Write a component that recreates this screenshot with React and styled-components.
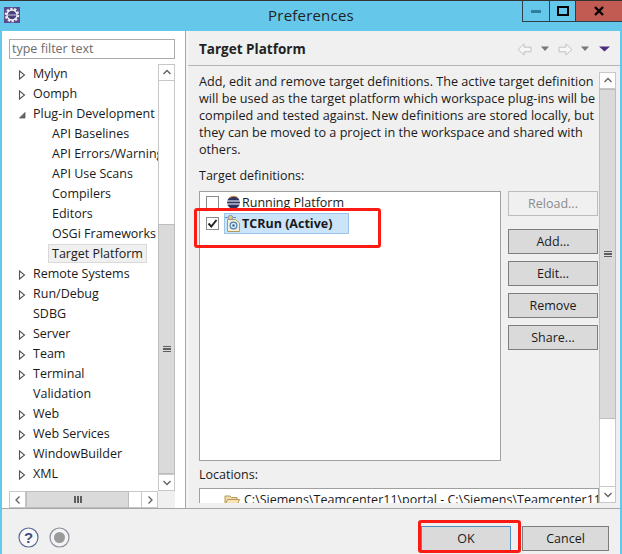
import React from "react"
import styled, { createGlobalStyle } from "styled-components"

const GlobalStyle = createGlobalStyle`
  html, body {
    margin: 0;
    padding: 0;
    background: #65c8ea;
  }

  * {
    box-sizing: border-box;
  }
`

const Window = styled.div`
  position: relative;
  width: 622px;
  height: 554px;
  display: flex;
  flex-direction: column;
  overflow: hidden;
  background: #65c8ea;
  border-top: 1px solid #333;
  color: #1a1a1a;
  font-family: "Open Sans", "Noto Sans", sans-serif;
  font-size: 12.5px;
`

const TitleBar = styled.div`
  position: relative;
  height: 30px;
  flex: none;
  display: flex;
  justify-content: space-between;
  padding-left: 4px;
`

const AppIcon = styled.svg`
  width: 16px;
  height: 16px;
  margin-top: 6px;
`

const Title = styled.div`
  position: absolute;
  left: 0;
  right: 0;
  top: 4px;
  text-align: center;
  font-size: 15px;
  color: #222;
  letter-spacing: 0.2px;
`

const Controls = styled.div`
  display: flex;
  height: 21px;
  z-index: 1;
`

const Control = styled.div`
  width: ${(p) => p.$w}px;
  display: flex;
  align-items: center;
  justify-content: center;
  background: ${(p) => (p.$close ? "#c25b52" : "transparent")};
  border: 1px solid #2e3f48;
  border-top: 0;
  border-left-width: ${(p) => (p.$first ? 1 : 0)}px;
  border-right-width: ${(p) => (p.$close ? 0 : 1)}px;
`

const Body = styled.div`
  flex: 1;
  min-height: 0;
  display: flex;
  margin: 0 2px;
  background: #f0f0f0;
`

const Sidebar = styled.div`
  width: 184px;
  flex: none;
  background: #fff;
  padding: 8px 10px 0 7px;
  display: flex;
  flex-direction: column;
  border-right: 1px solid #a6a6a6;
`

const Filter = styled.div`
  height: 20px;
  flex: none;
  border: 1px solid #ababab;
  padding-left: 2px;
  line-height: 18px;
  color: #6d6d6d;
`

const TreeArea = styled.div`
  margin-top: 5px;
  height: 444px;
  display: grid;
  grid-template-columns: 149px 17px;
  grid-template-rows: 427px 17px;
`

const Tree = styled.div`
  overflow: hidden;
  white-space: nowrap;
`

const Row = styled.div`
  height: 20px;
  display: flex;
  padding-left: ${(p) => (p.$child ? 39 : 20)}px;
  position: relative;
`

const RowLabel = styled.span`
  padding: 0 3px;
  height: 19px;
  line-height: 17px;
  background: ${(p) => (p.$selected ? "#f0f0f0" : "transparent")};
  border: 1px solid ${(p) => (p.$selected ? "#d9d9d9" : "transparent")};
`

const Twist = styled.svg`
  position: absolute;
  left: 7px;
  top: 5px;
  width: 12px;
  height: 12px;
`

const VBar = styled.div`
  display: flex;
  flex-direction: column;
  width: 17px;
  background: #fff;
`

const HBar = styled.div`
  display: flex;
  height: 17px;
  background: #fff;
`

const ArrowBox = styled.div`
  flex: none;
  width: 17px;
  height: 17px;
  background: #fff;
  border: 1px solid #c8c8c8;
  display: flex;
  align-items: center;
  justify-content: center;
`

const Track = styled.div`
  flex: ${(p) => p.$size};
  border: 0 solid #c8c8c8;
  border-width: ${(p) => (p.$horizontal ? "1px 0" : "0 1px")};
`

const Thumb = styled.div`
  flex: ${(p) => p.$size};
  background: #dadada;
  border: 1px solid #bdbdbd;
  display: flex;
  align-items: center;
  justify-content: center;
  flex-direction: ${(p) => (p.$horizontal ? "row" : "column")};
  gap: 1px;
`

const Grip = styled.span`
  background: #5e5e5e;
  width: ${(p) => (p.$horizontal ? "2px" : "8px")};
  height: ${(p) => (p.$horizontal ? "7px" : "1.5px")};
`

const Corner = styled.div`
  background: #f0f0f0;
`

const Main = styled.div`
  flex: 1;
  min-width: 0;
  margin-left: 1px;
  border-left: 1px solid #f7f7f7;
  display: flex;
  flex-direction: column;
`

const Header = styled.div`
  height: 35px;
  flex: none;
  display: flex;
  align-items: center;
  justify-content: space-between;
  padding: 1px 10px 0 11px;
  border-bottom: 1px solid #b4b4b4;
`

const Heading = styled.div`
  font-size: 13.5px;
  font-weight: 700;
  color: #222;
`

const Nav = styled.div`
  display: flex;
  align-items: center;
  margin-top: 1px;
`

const NavIcon = styled.svg`
  display: block;
  margin-left: ${(p) => p.$gap || 0}px;
`

const Scroller = styled.div`
  flex: 1;
  min-height: 0;
  display: flex;
  padding: 6px 0 5px 0;
`

const Content = styled.div`
  width: 411px;
  flex: none;
  padding-left: 11px;
  display: flex;
  flex-direction: column;
  overflow: hidden;
`

const Intro = styled.p`
  margin: 0;
  font-size: 12.65px;
  line-height: 17px;
  white-space: nowrap;
  height: 94px;
  flex: none;
  padding-top: 1px;
`

const Label = styled.div`
  height: 20px;
  flex: none;
  margin-top: ${(p) => p.$gap || 0}px;
  line-height: 20px;
  white-space: nowrap;
`

const DefsRow = styled.div`
  display: flex;
  gap: 7px;
  height: 270px;
  margin-top: 5px;
  flex: none;
`

const DefsList = styled.div`
  width: 302px;
  background: #fff;
  border: 1px solid #a0a0a0;
  padding-top: 0;
`

const DefRow = styled.div`
  height: 21px;
  display: flex;
  align-items: center;
  padding-left: 6px;
  gap: 5px;
`

const Check = styled.div`
  width: 13px;
  height: 13px;
  flex: none;
  border: 1px solid #8a8a8a;
  background: #fff;
  display: flex;
  align-items: center;
  justify-content: center;
`

const DefLabel = styled.div`
  display: flex;
  align-items: center;
  gap: 1px;
  height: 21px;
  width: ${(p) => (p.$active ? "125px" : "auto")};
  margin-top: ${(p) => (p.$active ? -1 : 0)}px;
  padding-left: ${(p) => (p.$active ? 0 : 1)}px;
  font-weight: ${(p) => (p.$active ? 700 : 400)};
  white-space: nowrap;
  background: ${(p) => (p.$active ? "#cce4f9" : "transparent")};
  border: 1px solid ${(p) => (p.$active ? "#9ac4e8" : "transparent")};
`

const Buttons = styled.div`
  width: 90px;
  display: flex;
  flex-direction: column;
`

const Button = styled.div`
  height: 25px;
  flex: none;
  margin-bottom: 7px;
  margin-top: ${(p) => p.$gap || 0}px;
  display: flex;
  align-items: center;
  justify-content: center;
  background: ${(p) => (p.$disabled ? "#f0f0f0" : "#dadada")};
  border: 1px solid ${(p) => (p.$disabled ? "#bcbcbc" : "#7d7d7d")};
  color: ${(p) => (p.$disabled ? "#8b8b8b" : "#1a1a1a")};
`

const Locations = styled.div`
  margin-top: 3px;
  height: 15px;
  flex: none;
  width: 400px;
  overflow: hidden;
  background: #fff;
  border: 1px solid #a0a0a0;
  border-bottom: 0;
  padding-left: 24px;
  display: flex;
  gap: 4px;
  white-space: nowrap;
`

const LocationFolder = styled.svg`
  flex: none;
  margin-top: 4px;
`

const LocationText = styled.span`
  line-height: 21px;
`

const Footer = styled.div`
  height: 46px;
  flex: none;
  margin: 0 2px;
  background: #f0f0f0;
  border-top: 1px solid #a6a6a6;
  display: flex;
  justify-content: space-between;
  padding: 17px 11px 0 16px;
`

const FooterIcons = styled.div`
  display: flex;
  height: 21px;
  gap: 10px;
  margin-top: 1px;
`

const FooterButtons = styled.div`
  display: flex;
  gap: 11px;
`

const DialogButton = styled.div`
  width: ${(p) => p.$w}px;
  height: 25px;
  display: flex;
  align-items: center;
  justify-content: center;
  background: #dadada;
  border: 1px solid ${(p) => (p.$default ? "#4a8fc0" : "#7d7d7d")};
`

const Highlight = styled.div`
  position: absolute;
  left: ${(p) => p.$x}px;
  top: ${(p) => p.$y}px;
  width: ${(p) => p.$w}px;
  height: ${(p) => p.$h}px;
  border: 3px solid #fa1c14;
  border-radius: 3px;
  pointer-events: none;
`

const Closed = () => (
  <Twist viewBox="0 0 12 12">
    <path d="M3.5 2 L8.5 6 L3.5 10 Z" fill="#fff" stroke="#555" strokeWidth="1.1" />
  </Twist>
)

const Open = () => (
  <Twist viewBox="0 0 12 12">
    <path d="M9 3.5 V9 H3.5 Z" fill="#666" stroke="#555" strokeWidth="0.8" />
  </Twist>
)

const Chevron = ({ dir }) => {
  const paths = {
    up: "M1.5 6 L5 2.5 L8.5 6",
    down: "M1.5 3 L5 6.5 L8.5 3",
    left: "M6.5 1.5 L3 5 L6.5 8.5",
    right: "M3.5 1.5 L7 5 L3.5 8.5",
  }
  return (
    <svg width="10" height="10" viewBox="0 0 10 10">
      <path d={paths[dir]} fill="none" stroke="#606060" strokeWidth="1.3" />
    </svg>
  )
}

const VScroll = ({ before, thumb, after }) => (
  <VBar>
    <ArrowBox>
      <Chevron dir="up" />
    </ArrowBox>
    <Track $size={before} />
    <Thumb $size={thumb}>
      <Grip />
      <Grip />
      <Grip />
    </Thumb>
    <Track $size={after} />
    <ArrowBox>
      <Chevron dir="down" />
    </ArrowBox>
  </VBar>
)

const GearIcon = () => (
  <AppIcon viewBox="0 0 16 16">
    <rect x="0" y="0" width="16" height="16" fill="#5b4a92" />
    <circle cx="8" cy="8" r="6" fill="none" stroke="#e8e8e8" strokeWidth="2.6" strokeDasharray="2.2 1.5" />
    <circle cx="8" cy="8" r="5" fill="#47407a" stroke="#f4f4f4" strokeWidth="1.3" />
    <rect x="4" y="7" width="8" height="2" fill="#8a84b0" />
  </AppIcon>
)

const EclipseIcon = () => (
  <svg width="15" height="15" viewBox="0 0 15 15">
    <circle cx="7.5" cy="7.5" r="6.5" fill="#2f3560" />
    <path d="M1 6 H14 M1 9 H14" stroke="#fff" strokeWidth="1.2" />
    <path d="M4 2.5 A6.5 6.5 0 0 1 12 3" fill="none" stroke="#e79a2f" strokeWidth="1" />
  </svg>
)

const TargetIcon = () => (
  <svg width="16" height="17" viewBox="0 0 16 17">
    <path d="M2.5 4.5 H10.5 L14.5 8 V16.5 H2.5 Z" fill="#f4efdd" stroke="#b49a5c" strokeWidth="1" />
    <circle cx="8.5" cy="10.5" r="3.4" fill="#dcecf7" stroke="#4a7fb0" strokeWidth="1.2" />
    <circle cx="8.5" cy="10.5" r="1.3" fill="#3a6fa5" />
    <path d="M0 2.5 H3 M8 2.5 H11" stroke="#6f8fb8" strokeWidth="1.2" />
    <circle cx="5.5" cy="2.5" r="2.2" fill="#e8cd78" stroke="#7f93c0" strokeWidth="1" />
  </svg>
)

const FolderIcon = () => (
  <LocationFolder width="16" height="14" viewBox="0 0 16 14">
    <path d="M1 12 V3 H6 L7.5 4.5 H13 V6" fill="#f1dcae" stroke="#b79656" strokeWidth="1" />
    <path d="M1 12.5 L3.5 6.5 H15.5 L13 12.5 Z" fill="#f6e3b8" stroke="#b79656" strokeWidth="1" />
  </LocationFolder>
)

const ArrowNav = ({ flip }) => (
  <NavIcon width="15" height="13" viewBox="0 0 16 14" $gap={flip ? 9 : 0}>
    <path
      d={flip ? "M1 4.5 H8.5 V1 L15 7 L8.5 13 V9.5 H1 Z" : "M15 4.5 H7.5 V1 L1 7 L7.5 13 V9.5 H15 Z"}
      fill="#f6f6f6"
      stroke="#bdbdbd"
      strokeWidth="1"
    />
  </NavIcon>
)

const Caret = ({ color, wide, gap }) => (
  <NavIcon width={wide ? 11 : 8} height="6" viewBox={wide ? "0 0 11 6" : "0 0 8 6"} $gap={gap}>
    <path d={wide ? "M0 0.5 H11 L5.5 5.5 Z" : "M0 0.5 H8 L4 5 Z"} fill={color} />
  </NavIcon>
)

const treeItems = [
  { label: "Mylyn", kind: "closed" },
  { label: "Oomph", kind: "closed" },
  { label: "Plug-in Development", kind: "open" },
  { label: "API Baselines", child: true },
  { label: "API Errors/Warnings", child: true },
  { label: "API Use Scans", child: true },
  { label: "Compilers", child: true },
  { label: "Editors", child: true },
  { label: "OSGi Frameworks", child: true },
  { label: "Target Platform", child: true, selected: true },
  { label: "Remote Systems", kind: "closed" },
  { label: "Run/Debug", kind: "closed" },
  { label: "SDBG" },
  { label: "Server", kind: "closed" },
  { label: "Team", kind: "closed" },
  { label: "Terminal", kind: "closed" },
  { label: "Validation" },
  { label: "Web", kind: "closed" },
  { label: "Web Services", kind: "closed" },
  { label: "WindowBuilder", kind: "closed" },
  { label: "XML", kind: "closed" },
]

const introLines = [
  "Add, edit and remove target definitions.  The active target definition",
  "will be used as the target platform which workspace plug-ins will be",
  "compiled and tested against.  New definitions are stored locally, but",
  "they can be moved to a project in the workspace and shared with",
  "others.",
]

const App = () => {
  return (
    <Window>
      <GlobalStyle />
      <TitleBar>
        <GearIcon />
        <Title>Preferences</Title>
        <Controls>
          <Control $w={28} $first>
            <svg width="10" height="3">
              <rect width="10" height="3" fill="#2f7f9c" />
            </svg>
          </Control>
          <Control $w={26}>
            <svg width="12" height="10">
              <rect x="1" y="1" width="10" height="8" fill="none" stroke="#000" strokeWidth="2" />
            </svg>
          </Control>
          <Control $w={46} $close>
            <svg width="10" height="10" viewBox="0 0 10 10">
              <path d="M1 1 L9 9 M9 1 L1 9" stroke="#000" strokeWidth="2.4" />
            </svg>
          </Control>
        </Controls>
      </TitleBar>

      <Body>
        <Sidebar>
          <Filter>type filter text</Filter>
          <TreeArea>
            <Tree>
              {treeItems.map((item) => (
                <Row key={item.label} $child={item.child}>
                  {item.kind === "closed" && <Closed />}
                  {item.kind === "open" && <Open />}
                  <RowLabel $selected={item.selected}>{item.label}</RowLabel>
                </Row>
              ))}
            </Tree>
            <VScroll before={144} thumb={249} after={0} />
            <HBar>
              <ArrowBox>
                <Chevron dir="left" />
              </ArrowBox>
              <Thumb $size={103} $horizontal>
                <Grip $horizontal />
                <Grip $horizontal />
                <Grip $horizontal />
              </Thumb>
              <Track $size={12} $horizontal />
              <ArrowBox>
                <Chevron dir="right" />
              </ArrowBox>
            </HBar>
            <Corner />
          </TreeArea>
        </Sidebar>

        <Main>
          <Header>
            <Heading>Target Platform</Heading>
            <Nav>
              <ArrowNav />
              <Caret color="#777" gap={9} />
              <ArrowNav flip />
              <Caret color="#777" gap={8} />
              <Caret color="#4b2d7f" wide gap={10} />
            </Nav>
          </Header>
          <Scroller>
            <Content>
              <Intro>
                {introLines.map((line) => (
                  <React.Fragment key={line}>
                    {line}
                    <br />
                  </React.Fragment>
                ))}
              </Intro>
              <Label>Target definitions:</Label>
              <DefsRow>
                <DefsList>
                  <DefRow>
                    <Check />
                    <DefLabel>
                      <EclipseIcon />
                      Running Platform
                    </DefLabel>
                  </DefRow>
                  <DefRow>
                    <Check>
                      <svg width="11" height="11" viewBox="0 0 11 11">
                        <path d="M1.5 5.5 L4.3 8.5 L9.5 2" fill="none" stroke="#222" strokeWidth="2" />
                      </svg>
                    </Check>
                    <DefLabel $active>
                      <TargetIcon />
                      TCRun (Active)
                    </DefLabel>
                  </DefRow>
                </DefsList>
                <Buttons>
                  <Button $disabled>Reload...</Button>
                  <Button $gap={6}>Add...</Button>
                  <Button>Edit...</Button>
                  <Button>Remove</Button>
                  <Button>Share...</Button>
                </Buttons>
              </DefsRow>
              <Label $gap={4}>Locations:</Label>
              <Locations>
                <FolderIcon />
                <LocationText>C:\Siemens\Teamcenter11\portal - C:\Siemens\Teamcenter11</LocationText>
              </Locations>
            </Content>
            <VScroll before={0} thumb={330} after={67} />
          </Scroller>
        </Main>
      </Body>

      <Footer>
        <FooterIcons>
          <svg width="21" height="21" viewBox="0 0 21 21">
            <circle cx="10.5" cy="10.5" r="9.5" fill="#f8f8fb" stroke="#5a6c94" strokeWidth="1.2" />
            <text x="10.5" y="16" textAnchor="middle" fontFamily="Liberation Sans" fontWeight="700" fontSize="15" fill="#3d4f78">?</text>
          </svg>
          <svg width="21" height="21" viewBox="0 0 21 21">
            <circle cx="10.5" cy="10.5" r="9.5" fill="#f4f4f4" stroke="#8a8f99" strokeWidth="1.2" />
            <circle cx="10.5" cy="10.5" r="5.5" fill="#9a9a9a" />
          </svg>
        </FooterIcons>
        <FooterButtons>
          <DialogButton $w={90} $default>OK</DialogButton>
          <DialogButton $w={87}>Cancel</DialogButton>
        </FooterButtons>
      </Footer>

      <Highlight $x={194} $y={207} $w={187} $h={40} />
      <Highlight $x={418} $y={519} $w={103} $h={33} />
    </Window>
  )
}

export default App
